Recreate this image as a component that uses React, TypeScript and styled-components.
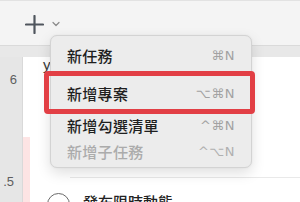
import React from "react";
import styled, { createGlobalStyle } from "styled-components";

const Global = createGlobalStyle`
  html, body { margin: 0; padding: 0; }
  body {
    width: 300px; height: 202px; overflow: hidden; background: #ffffff;
    font-family: "Noto Sans CJK TC", "Noto Sans", "Liberation Sans", sans-serif;
  }
`;

const Page = styled.div`
  position: relative;
  width: 300px;
  height: 202px;
  overflow: hidden;
  display: flex;
  flex-direction: column;
`;

const Toolbar = styled.div`
  height: 46px;
  flex: none;
  box-sizing: border-box;
  border-top: 1px solid #e2e2e2;
  border-bottom: 1px solid #dadada;
  background: #f4f4f4;
  display: flex;
  align-items: center;
  padding-left: 25px;
  gap: 8px;
`;

const AddButton = styled.div`
  display: flex;
  align-items: center;
  gap: 8px;
  margin-top: 2px;
`;

const Band = styled.div`
  height: 11px;
  flex: none;
  background: #e8e8e8;
`;

const Body = styled.div`
  flex: 1;
  display: flex;
  min-height: 0;
  overflow: hidden;
`;

const Gutter = styled.div`
  width: 22px;
  flex: none;
  background: #e6e6e6;
  border-right: 1px solid #d9d9d9;
  overflow: hidden;
  display: flex;
  flex-direction: column;
`;

const Num = styled.div<{ $top: number; $right: number }>`
  flex: none;
  margin-top: ${(p) => p.$top}px;
  padding-right: ${(p) => p.$right}px;
  text-align: right;
  font-family: "Liberation Sans", sans-serif;
  font-size: 13px;
  line-height: 14px;
  color: #5e5e5e;
  white-space: nowrap;
`;

const Accent = styled.div`
  width: 7px;
  flex: none;
  display: flex;
  flex-direction: column;
`;

const AccentFill = styled.div<{ $h?: number; $color: string }>`
  ${(p) => (p.$h ? `height: ${p.$h}px; flex: none;` : "flex: 1;")}
  background: ${(p) => p.$color};
`;

const Main = styled.div`
  flex: 1;
  display: flex;
  flex-direction: column;
`;

const Label = styled.div`
  flex: none;
  box-sizing: border-box;
  height: 120px;
  padding: 1px 0 0 13px;
  font-family: "Liberation Sans", sans-serif;
  font-size: 15px;
  line-height: 14px;
  color: #3a3a3a;
`;

const Divider = styled.div`
  flex: none;
  margin-left: 40px;
  height: 1px;
  background: #e9e9e9;
`;

const TaskRow = styled.div`
  flex: none;
  display: flex;
  align-items: flex-start;
  gap: 13px;
  padding: 15px 0 0 17px;
`;

const Circle = styled.div`
  width: 21px;
  height: 21px;
  border-radius: 50%;
  border: 1px solid #6a6a6a;
  flex: none;
`;

const TaskText = styled.div`
  font-size: 15px;
  font-weight: 500;
  line-height: 20px;
  color: #222;
  margin-top: -1px;
`;

const Menu = styled.div`
  position: absolute;
  left: 50px;
  top: 35px;
  width: 202px;
  height: 133px;
  box-sizing: border-box;
  background: #ececec;
  border: 1px solid #d3d3d3;
  border-radius: 7px;
  box-shadow: 0 5px 14px rgba(0, 0, 0, 0.13), 0 0 2px rgba(0, 0, 0, 0.06);
  padding-top: 5px;
  display: flex;
  flex-direction: column;
`;

const Item = styled.div<{ $h: number; $mt?: number }>`
  position: relative;
  flex: none;
  height: ${(p) => p.$h}px;
  margin-top: ${(p) => p.$mt ?? 0}px;
  display: flex;
  align-items: center;
  justify-content: space-between;
  padding: 0 16px 0 16px;
`;

const ItemText = styled.span<{ $disabled?: boolean }>`
  font-size: 15px;
  font-weight: 500;
  letter-spacing: 0.3px;
  color: ${(p) => (p.$disabled ? "#ababab" : "#1f1f1f")};
`;

const Shortcut = styled.span<{ $disabled?: boolean }>`
  font-family: "DejaVu Sans", "Liberation Sans", sans-serif;
  font-size: 13px;
  letter-spacing: 0.5px;
  color: ${(p) => (p.$disabled ? "#b0b0b0" : "#a2a2a2")};
`;

const Highlight = styled.div`
  position: absolute;
  left: -7px;
  top: -4px;
  width: 211px;
  height: 43px;
  box-sizing: border-box;
  border: 5px solid #e23f45;
  border-radius: 4px;
  pointer-events: none;
`;

const PlusIcon = () => (
  <svg width="19" height="19" viewBox="0 0 19 19">
    <path d="M9.5 1v17M1 9.5h17" stroke="#4f555d" strokeWidth="2.2" strokeLinecap="round" />
  </svg>
);

const Chevron = () => (
  <svg width="8" height="6" viewBox="0 0 8 6">
    <path d="M1 1.5l3 3 3-3" stroke="#8a8a8a" strokeWidth="1.2" fill="none" strokeLinecap="round" strokeLinejoin="round" />
  </svg>
);

const items = [
  { text: "新任務", key: "⌘N", h: 28 },
  { text: "新增專案", key: "⌥⌘N", h: 36, mt: 6, hl: true },
  { text: "新增勾選清單", key: "^⌘N", h: 28 },
  { text: "新增子任務", key: "^⌥N", h: 24, disabled: true },
];

export default function App() {
  return (
    <>
      <Global />
      <Page>
        <Toolbar>
          <AddButton>
            <PlusIcon />
            <Chevron />
          </AddButton>
        </Toolbar>
        <Band />
        <Body>
          <Gutter>
            <Num $top={16} $right={5}>6</Num>
            <Num $top={88} $right={8}>.5</Num>
          </Gutter>
          <Accent>
            <AccentFill $h={80} $color="#ffffff" />
            <AccentFill $color="#fde4e4" />
          </Accent>
          <Main>
            <Label>y</Label>
            <Divider />
            <TaskRow>
              <Circle />
              <TaskText>發布限時動態</TaskText>
            </TaskRow>
          </Main>
        </Body>
        <Menu>
          {items.map((it) => (
            <Item key={it.text} $h={it.h} $mt={it.mt}>
              <ItemText $disabled={it.disabled}>{it.text}</ItemText>
              <Shortcut $disabled={it.disabled}>{it.key}</Shortcut>
              {it.hl && <Highlight />}
            </Item>
          ))}
        </Menu>
      </Page>
    </>
  );
}
